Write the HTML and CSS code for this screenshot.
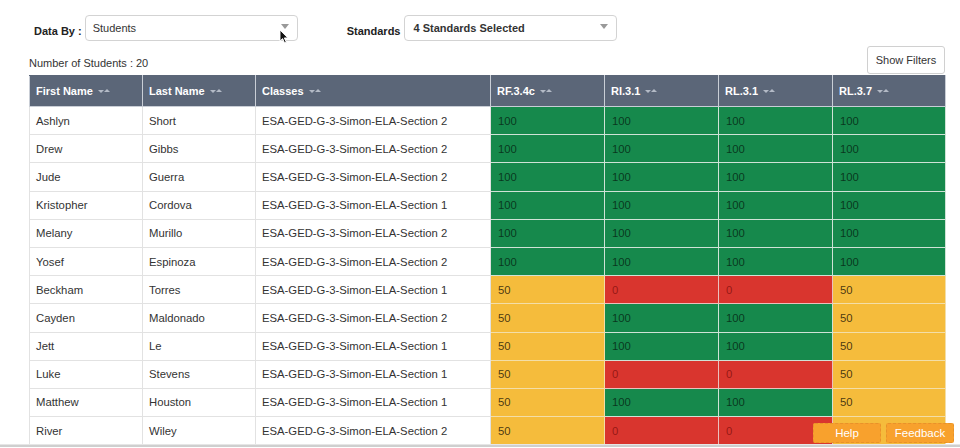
FILE: index.html
```html
<!DOCTYPE html>
<html>
<head>
<meta charset="utf-8">
<link rel="stylesheet" href="styles.css">
</head>
<body>
<div class="page">
  <div class="toolbar">
    <label class="lbl">Data By :</label>
    <div class="select sel-data">
      <span>Students</span>
      <svg class="caret" width="8" height="5" viewBox="0 0 8 5"><path d="M0 0H8L4 5Z" fill="#999"/></svg>
    </div>
    <label class="lbl lbl-std">Standards</label>
    <div class="select sel-std">
      <span class="bold">4 Standards Selected</span>
      <svg class="caret" width="8" height="5" viewBox="0 0 8 5"><path d="M0 0H8L4 5Z" fill="#999"/></svg>
    </div>
  </div>
  <div class="meta">
    <span class="count">Number of Students : 20</span>
    <button class="btn">Show Filters</button>
  </div>
  <table class="grid">
    <colgroup>
      <col class="c1"><col class="c2"><col class="c3"><col class="c4"><col class="c5"><col class="c6"><col class="c7">
    </colgroup>
    <thead>
      <tr>
        <th>First Name <i class="sort"></i></th>
        <th>Last Name <i class="sort"></i></th>
        <th>Classes <i class="sort"></i></th>
        <th>RF.3.4c <i class="sort"></i></th>
        <th>RI.3.1 <i class="sort"></i></th>
        <th>RL.3.1 <i class="sort"></i></th>
        <th>RL.3.7 <i class="sort"></i></th>
      </tr>
    </thead>
    <tbody>
      <tr><td>Ashlyn</td><td>Short</td><td>ESA-GED-G-3-Simon-ELA-Section 2</td><td class="g">100</td><td class="g">100</td><td class="g">100</td><td class="g">100</td></tr>
      <tr><td>Drew</td><td>Gibbs</td><td>ESA-GED-G-3-Simon-ELA-Section 2</td><td class="g">100</td><td class="g">100</td><td class="g">100</td><td class="g">100</td></tr>
      <tr><td>Jude</td><td>Guerra</td><td>ESA-GED-G-3-Simon-ELA-Section 2</td><td class="g">100</td><td class="g">100</td><td class="g">100</td><td class="g">100</td></tr>
      <tr><td>Kristopher</td><td>Cordova</td><td>ESA-GED-G-3-Simon-ELA-Section 1</td><td class="g">100</td><td class="g">100</td><td class="g">100</td><td class="g">100</td></tr>
      <tr><td>Melany</td><td>Murillo</td><td>ESA-GED-G-3-Simon-ELA-Section 2</td><td class="g">100</td><td class="g">100</td><td class="g">100</td><td class="g">100</td></tr>
      <tr><td>Yosef</td><td>Espinoza</td><td>ESA-GED-G-3-Simon-ELA-Section 2</td><td class="g">100</td><td class="g">100</td><td class="g">100</td><td class="g">100</td></tr>
      <tr><td>Beckham</td><td>Torres</td><td>ESA-GED-G-3-Simon-ELA-Section 1</td><td class="y">50</td><td class="r">0</td><td class="r">0</td><td class="y">50</td></tr>
      <tr><td>Cayden</td><td>Maldonado</td><td>ESA-GED-G-3-Simon-ELA-Section 2</td><td class="y">50</td><td class="g">100</td><td class="g">100</td><td class="y">50</td></tr>
      <tr><td>Jett</td><td>Le</td><td>ESA-GED-G-3-Simon-ELA-Section 1</td><td class="y">50</td><td class="g">100</td><td class="g">100</td><td class="y">50</td></tr>
      <tr><td>Luke</td><td>Stevens</td><td>ESA-GED-G-3-Simon-ELA-Section 1</td><td class="y">50</td><td class="r">0</td><td class="r">0</td><td class="y">50</td></tr>
      <tr><td>Matthew</td><td>Houston</td><td>ESA-GED-G-3-Simon-ELA-Section 1</td><td class="y">50</td><td class="g">100</td><td class="g">100</td><td class="y">50</td></tr>
      <tr><td>River</td><td>Wiley</td><td>ESA-GED-G-3-Simon-ELA-Section 2</td><td class="y">50</td><td class="r">0</td><td class="r">0</td><td class="y"></td></tr>
    </tbody>
  </table>
</div>
<svg class="cursor" width="10" height="15" viewBox="0 0 10 15"><path d="M1 1V12L3.6 9.6L5.6 14L7.3 13.2L5.3 8.9H8.8Z" fill="#111" stroke="#fff" stroke-width="0.9"/></svg>
<div class="help-bar">
  <button class="hbtn hb-help">Help</button>
  <button class="hbtn hb-feed">Feedback</button>
</div>
<div class="edge"></div>
</body>
</html>
```
FILE: styles.css
```css
html, body {
  margin: 0;
  padding: 0;
  background: #fff;
  overflow: hidden;
}
body {
  font-family: "Liberation Sans", Arial, Helvetica, sans-serif;
  color: #333;
  font-size: 11px;
  width: 960px;
  height: 448px;
  position: relative;
}
.page {
  padding: 15px 15px 0 29px;
}
.toolbar {
  display: flex;
  align-items: center;
  padding-left: 5px;
  height: 26px;
}
.lbl {
  font-weight: bold;
  font-size: 11px;
  color: #222;
  margin-right: 3px;
  padding-top: 6px;
}
.lbl-std {
  margin-left: 49px;
  margin-right: 4px;
}
.select {
  box-sizing: border-box;
  width: 213px;
  height: 26px;
  border: 1px solid #d3d3d3;
  border-radius: 4px;
  display: flex;
  align-items: center;
  justify-content: space-between;
  padding: 0 8px 0 7px;
  font-size: 11px;
  color: #333;
  background: #fff;
}
.select span {
  margin-top: -1px;
}
.select .bold {
  font-weight: bold;
  margin-left: 1px;
}
.caret {
  margin-top: -3px;
}
.meta {
  display: flex;
  justify-content: space-between;
  align-items: flex-end;
  margin-top: 6px;
  height: 28px;
}
.count {
  font-size: 11px;
  color: #333;
  padding-bottom: 6px;
}
.btn {
  font-family: "Liberation Sans", Arial, sans-serif;
  font-size: 11px;
  color: #333;
  background: #fff;
  border: 1px solid #d0d0d0;
  border-radius: 3px;
  height: 28px;
  width: 78px;
  padding: 0;
  margin-bottom: 1px;
}
.grid {
  border-collapse: collapse;
  width: 916px;
  table-layout: fixed;
}
.c1 { width: 113px; }
.c2 { width: 113px; }
.c3 { width: 235px; }
.c4 { width: 114px; }
.c5 { width: 114px; }
.c6 { width: 114px; }
.c7 { width: 113px; }
.grid th {
  background: #5b6678;
  color: #fff;
  font-weight: bold;
  font-size: 11px;
  text-align: left;
  height: 31px;
  padding: 0 6px;
  border: 1px solid #c9ced6;
  border-top-color: #5b6678;
  box-sizing: border-box;
}
.sort {
  display: inline-block;
  width: 12px;
  height: 5px;
  margin-left: 2px;
  vertical-align: 1px;
  position: relative;
}
.sort::before,
.sort::after {
  content: "";
  position: absolute;
  width: 0;
  height: 0;
  border-left: 3px solid transparent;
  border-right: 3px solid transparent;
}
.sort::before {
  left: 0;
  top: 1px;
  border-top: 3px solid #b3bac6;
}
.sort::after {
  left: 6px;
  top: 0;
  border-bottom: 3px solid #b3bac6;
}
.grid td {
  height: 28.2px;
  padding: 0 6px;
  border: 1px solid #e2e2e2;
  font-size: 11.3px;
  color: #333;
  box-sizing: border-box;
  white-space: nowrap;
  overflow: hidden;
}
.grid td.g {
  background: #16894c;
  color: rgba(0, 0, 0, 0.62);
  padding-left: 7px;
  border-color: #cfe3d6;
}
.grid td.y {
  background: #f5bc3c;
  color: rgba(0, 0, 0, 0.72);
  padding-left: 7px;
  border-color: #f3dea8;
}
.grid td.r {
  background: #d9352e;
  color: rgba(90, 0, 0, 0.55);
  padding-left: 7px;
  border-color: #ebc0bd;
}
.cursor {
  position: absolute;
  left: 279px;
  top: 29px;
}
.help-bar {
  position: absolute;
  right: 6px;
  bottom: 5px;
  display: flex;
  gap: 5px;
}
.hbtn {
  font-family: "Liberation Sans", Arial, sans-serif;
  font-size: 11.5px;
  color: #fff;
  background: #f8a12d;
  border: 1px dashed #e8922a;
  border-radius: 2px;
  width: 68px;
  height: 20px;
  padding: 0;
}
.edge {
  position: absolute;
  left: 0;
  right: 0;
  bottom: 1px;
  height: 2px;
  background: #cfcfcf;
  border-top: 1px solid #e6e6e6;
}
```
